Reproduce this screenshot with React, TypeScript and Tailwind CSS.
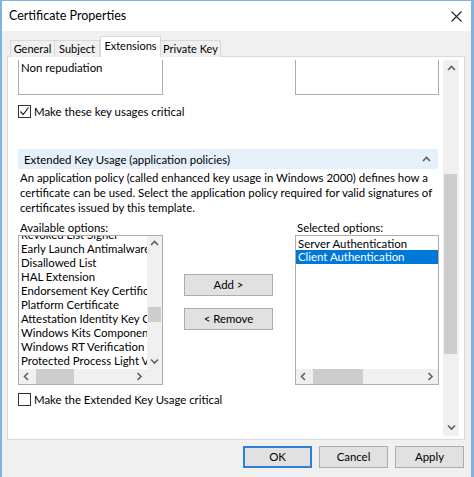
import React from "react";

type Dir = "up" | "down" | "left" | "right";

// small Win10-style scrollbar arrow
function Arrow({ dir }: { dir: Dir }) {
  const pts: Record<Dir, string> = {
    up: "1,5 4.5,1.5 8,5",
    down: "1,1.5 4.5,5 8,1.5",
    left: "5,1 1.5,4.5 5,8",
    right: "1.5,1 5,4.5 1.5,8",
  };
  const horiz = dir === "up" || dir === "down";
  return (
    <svg width={horiz ? 9 : 7} height={horiz ? 7 : 9} viewBox={horiz ? "0 0 9 7" : "0 0 7 9"}>
      <polyline points={pts[dir]} fill="none" stroke="#606060" strokeWidth="1.6" />
    </svg>
  );
}

function Checkbox({ checked, label }: { checked?: boolean; label: string }) {
  return (
    <div className="flex items-center h-[13px] gap-[3px]">
      <div className="w-[13px] h-[13px] border border-[#333333] bg-white flex items-center justify-center">
        {checked && (
          <svg width="11" height="11" viewBox="0 0 11 11">
            <polyline points="1.5,5.5 4.2,8.5 9.5,1.5" fill="none" stroke="#222" strokeWidth="1.2" />
          </svg>
        )}
      </div>
      <span>{label}</span>
    </div>
  );
}

function Button({ children, primary, className = "" }: { children: React.ReactNode; primary?: boolean; className?: string }) {
  return (
    <div
      className={`h-[22px] flex items-center justify-center bg-[#e1e1e1] border ${
        primary ? "border-[#2d7fd3] shadow-[inset_0_0_0_1px_#2d7fd3]" : "border-[#adadad]"
      } ${className}`}
    >
      {children}
    </div>
  );
}

function HScroll({ thumbLeft, thumbWidth }: { thumbLeft: number; thumbWidth: number }) {
  return (
    <div className="h-[15px] bg-[#f0f0f0] flex items-center relative">
      <div className="w-[15px] flex justify-center"><Arrow dir="left" /></div>
      <div className="flex-1 h-full relative">
        <div className="absolute top-0 h-full bg-[#cdcdcd]" style={{ left: thumbLeft, width: thumbWidth }} />
      </div>
      <div className="w-[15px] flex justify-center"><Arrow dir="right" /></div>
    </div>
  );
}

const available = [
  "Revoked List Signer",
  "Early Launch Antimalware Driver",
  "Disallowed List",
  "HAL Extension",
  "Endorsement Key Certificate",
  "Platform Certificate",
  "Attestation Identity Key Certificate",
  "Windows Kits Component",
  "Windows RT Verification",
  "Protected Process Light Verification",
];

export default function App() {
  return (
    <div className="w-[474px] h-[477px] bg-[#f0f0f0] border-l-2 border-r-[3px] border-t border-[#7fb4e2] flex flex-col text-[11.4px] text-black font-['Lato',sans-serif] leading-[14px] overflow-hidden">
      {/* title bar */}
      <div className="h-[30px] bg-white flex items-center justify-between pl-[7px] pr-[9px] shrink-0">
        <span className="text-[12.5px]">Certificate Properties</span>
        <svg width="11" height="11" viewBox="0 0 11 11">
          <path d="M0.5 0.5 L10.5 10.5 M10.5 0.5 L0.5 10.5" stroke="#222" strokeWidth="1.1" />
        </svg>
      </div>

      <div className="flex flex-col pl-[5px] pr-[6px]">
        {/* tabs */}
        <div className="flex items-end h-[26px] pl-[3px] relative z-10 -mb-px text-[11px]">
          <div className="w-[45px] h-[17px] border border-b-0 border-[#d9d9d9] bg-[#f0f0f0] flex items-center justify-center">General</div>
          <div className="w-[45px] h-[17px] border border-b-0 border-l-0 border-[#d9d9d9] bg-[#f0f0f0] flex items-center justify-center">Subject</div>
          <div className="w-[61px] h-[21px] border border-b-0 border-[#d9d9d9] bg-white flex items-center justify-center pb-[3px]">Extensions</div>
          <div className="w-[60px] h-[17px] border border-b-0 border-l-0 border-[#d9d9d9] bg-[#f0f0f0] flex items-center justify-center">Private Key</div>
        </div>

        {/* tab page */}
        <div className="h-[384px] border border-[#d9d9d9] bg-white flex pt-[3px] pb-[3px] pr-[5px]">
          <div className="flex-1 overflow-hidden pl-[10px] pr-[4px]">
            {/* key usage lists, scrolled partly out of view */}
            <div className="flex justify-between h-[35px]">
              <div className="w-[145px] border border-t-0 border-[#abadb3] pl-[2px] pt-px">Non repudiation</div>
              <div className="w-[144px] border border-t-0 border-[#abadb3]" />
            </div>

            <div className="mt-[10px]">
              <Checkbox checked label="Make these key usages critical" />
            </div>

            {/* extended key usage section */}
            <div className="mt-[31px] w-[420px] h-[20px] bg-[#e5f0fb] flex items-center justify-between pl-[6px] pr-[7px] pt-px">
              <span>Extended Key Usage (application policies)</span>
              <Arrow dir="up" />
            </div>
            <p className="mt-[1px] pl-[2px] leading-[15px] whitespace-nowrap">
              An application policy (called enhanced key usage in Windows 2000) defines how a
              <br />
              certificate can be used. Select the application policy required for valid signatures of
              <br />
              certificates issued by this template.
            </p>

            <div className="flex mt-[6px]">
              <div className="w-[145px] flex flex-col">
                <span className="pl-[2px] h-[14px]">Available options:</span>
                <div className="h-[150px] border border-[#abadb3] flex flex-col">
                  <div className="flex-1 flex overflow-hidden">
                    <div className="flex-1 overflow-hidden">
                      <div className="-mt-[8px] pl-[2px]">
                        {available.map((t) => (
                          <div key={t} className="h-[14px] whitespace-nowrap">{t}</div>
                        ))}
                      </div>
                    </div>
                    <div className="w-[15px] bg-[#f0f0f0] flex flex-col items-center">
                      <div className="h-[15px] flex items-center"><Arrow dir="up" /></div>
                      <div className="flex-1 w-full relative">
                        <div className="absolute left-[1px] right-[1px] top-[56px] h-[15px] bg-[#cdcdcd]" />
                      </div>
                      <div className="h-[15px] flex items-center"><Arrow dir="down" /></div>
                    </div>
                  </div>
                  <div className="flex">
                    <div className="flex-1">
                      <HScroll thumbLeft={2} thumbWidth={38} />
                    </div>
                    <div className="w-[15px] h-[15px] bg-[#f0f0f0]" />
                  </div>
                </div>
              </div>

              <div className="w-[89px] ml-[21px] flex flex-col pt-[53px] gap-[12px]">
                <Button>Add &gt;</Button>
                <Button>&lt; Remove</Button>
              </div>

              <div className="w-[144px] ml-[22px] flex flex-col">
                <span className="pl-[2px] h-[14px]">Selected options:</span>
                <div className="h-[150px] border border-[#abadb3] flex flex-col">
                  <div className="flex-1 overflow-hidden pt-px">
                    <div className="h-[13px] pl-[2px] whitespace-nowrap">Server Authentication</div>
                    <div className="h-[14px] pl-[2px] whitespace-nowrap bg-[#0078d7] text-white">Client Authentication</div>
                  </div>
                  <HScroll thumbLeft={2} thumbWidth={50} />
                </div>
              </div>
            </div>

            <div className="mt-[8px]">
              <Checkbox label="Make the Extended Key Usage critical" />
            </div>
          </div>

          {/* page scrollbar */}
          <div className="w-[16px] bg-[#f0f0f0] flex flex-col items-center">
            <div className="h-[17px] flex items-center"><Arrow dir="up" /></div>
            <div className="flex-1 w-full relative">
              <div className="absolute left-[1px] right-[2px] top-[97px] h-[180px] bg-[#cdcdcd]" />
            </div>
            <div className="h-[17px] flex items-center"><Arrow dir="down" /></div>
          </div>
        </div>

        {/* dialog buttons */}
        <div className="flex justify-end gap-[7px] mt-[6px] pr-[1px]">
          <Button primary className="w-[69px]">OK</Button>
          <Button className="w-[69px]">Cancel</Button>
          <Button className="w-[69px]">Apply</Button>
        </div>
      </div>
    </div>
  );
}
